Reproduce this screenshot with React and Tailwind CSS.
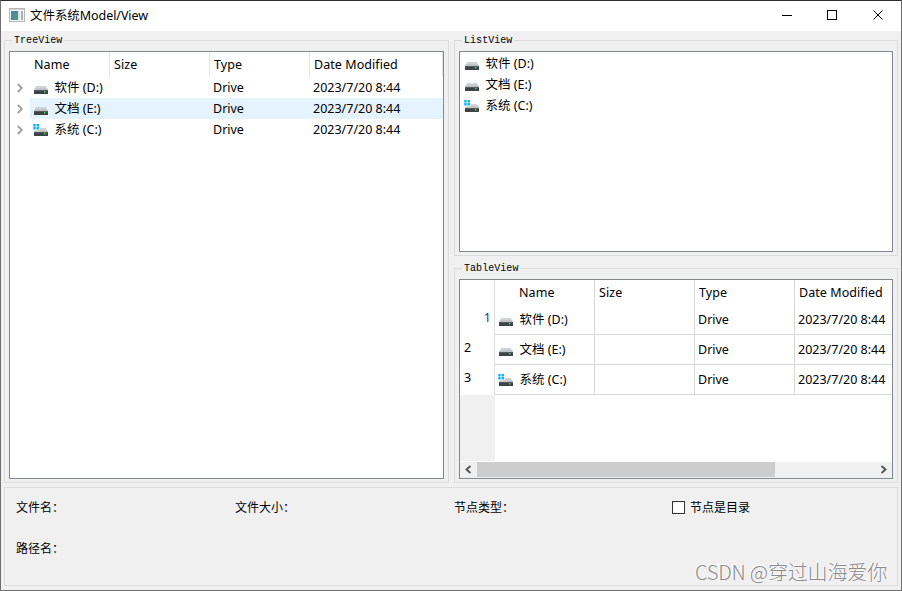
import React from 'react';

const drives = [
  { name: '软件 (D:)', type: 'Drive', date: '2023/7/20 8:44' },
  { name: '文档 (E:)', type: 'Drive', date: '2023/7/20 8:44' },
  { name: '系统 (C:)', type: 'Drive', date: '2023/7/20 8:44', system: true },
];

const DriveIcon = ({ system }) => (
  <svg width="16" height="16" viewBox="0 0 16 16" className="shrink-0">
    <path d="M3.2 6h9.6L15 10H1z" fill="#d0d3d6" />
    <path d="M2 8.2h12L15 10.2H1z" fill="#bfc2c5" />
    <rect x="1" y="10" width="14" height="4" rx="0.5" fill="#3d4245" />
    <rect x="1" y="10" width="14" height="1" fill="#565b5e" />
    <rect x="11" y="11" width="1.4" height="1.4" fill="#3fe05a" />
    {system && (
      <g>
        <rect x="0" y="1" width="6.6" height="7.4" fill="#fff" />
        <path d="M0.2 2h2.5v2.4H0.2zM3.5 2h2.5v2.4H3.5zM0.2 5.1h2.5v2.4H0.2zM3.5 5.1h2.5v2.4H3.5z" fill="#12b4f0" />
      </g>
    )}
  </svg>
);

const WindowIcon = () => (
  <svg width="16" height="16" viewBox="0 0 16 16">
    <defs>
      <linearGradient id="pane" x1="0" y1="0" x2="1" y2="1">
        <stop offset="0" stopColor="#4a86a8" />
        <stop offset="1" stopColor="#4f9a72" />
      </linearGradient>
    </defs>
    <rect x="0.5" y="0.5" width="15" height="13" fill="#f4f5f6" stroke="#b4b6b8" />
    <rect x="1" y="1" width="14" height="1" fill="#cfd3d6" />
    <rect x="2" y="3" width="7" height="9" fill="url(#pane)" />
    <rect x="9" y="3" width="2" height="9" fill="#dfe3e6" />
    <rect x="12" y="3" width="2" height="9" fill="#9fb3b8" />
  </svg>
);

const Chevron = () => (
  <svg width="7" height="10" viewBox="0 0 7 10" fill="none" stroke="#a0a0a0" strokeWidth="1.8">
    <path d="M0.8 1L4.8 5L0.8 9" />
  </svg>
);

const GroupBox = ({ title, className, children }) => (
  <fieldset className={`relative border border-[#dcdcdc] ${className}`}>
    <span className="absolute -top-[7px] left-[7px] h-[13px] bg-[#f0f0f0] px-[2px] font-['Liberation_Mono',monospace] text-[10px] leading-[14px] tracking-[0.05px]">
      {title}
    </span>
    {children}
  </fieldset>
);

const TitleBar = () => (
  <div className="flex h-[30px] items-center bg-white pl-2">
    <WindowIcon />
    <span className="ml-[5px] flex-1 tracking-[-0.06px]">文件系统Model/View</span>
    <svg width="138" height="30" viewBox="0 0 138 30" fill="none" stroke="#000">
      <path d="M19 14.5h10" />
      <rect x="64.5" y="9.5" width="9" height="9" />
      <path d="M110.5 9.5l9 9M119.5 9.5l-9 9" />
    </svg>
  </div>
);

const TreeView = () => (
  <div className="h-[428px] border border-[#828790] bg-white">
    <div className="flex h-[25px] leading-[25px] tracking-[0.06px]">
      <div className="w-[100px] border-r border-[#e5e5e5] pl-6">Name</div>
      <div className="w-[100px] border-r border-[#e5e5e5] pl-1">Size</div>
      <div className="w-[100px] border-r border-[#e5e5e5] pl-1">Type</div>
      <div className="flex-1 border-r border-[#e5e5e5] pl-1">Date Modified</div>
    </div>
    {drives.map((drive, i) => (
      <div key={drive.name} className="flex h-[21px] leading-[21px]">
        <div className="flex w-5 items-center pl-[7px]">
          <Chevron />
        </div>
        <div className={`flex flex-1 ${i === 1 ? 'bg-[#e5f3ff]' : ''}`}>
          <div className="flex w-[183px] items-center gap-[5.5px] pl-[3px]">
            <DriveIcon system={drive.system} />
            {drive.name}
          </div>
          <div className="w-[100px]">{drive.type}</div>
          <div>{drive.date}</div>
        </div>
      </div>
    ))}
  </div>
);

const ListView = () => (
  <div className="h-[201px] border border-[#828790] bg-white pt-px">
    {drives.map((drive) => (
      <div key={drive.name} className="flex h-[21px] items-center gap-[5.5px] pl-1 leading-[21px]">
        <DriveIcon system={drive.system} />
        {drive.name}
      </div>
    ))}
  </div>
);

const TableView = () => (
  <div className="flex h-[200px] flex-col border border-[#828790] bg-white">
    <div className="flex h-[25px] leading-[26px] tracking-[0.06px]">
      <div className="w-[35px] border-r border-[#e0e0e0]" />
      <div className="w-[100px] border-r border-[#d8d8d8] pl-6">Name</div>
      <div className="w-[100px] border-r border-[#d8d8d8] pl-1">Size</div>
      <div className="w-[100px] border-r border-[#d8d8d8] pl-1">Type</div>
      <div className="pl-1">Date Modified</div>
    </div>
    {drives.map((drive, i) => (
      <div key={drive.name} className="flex h-[30px] leading-[30px]">
        <div className={`w-[35px] border-r border-[#e0e0e0] leading-[26px] ${i === 0 ? 'pr-[3px] text-right text-[#1a3f66]' : 'pl-1'}`}>
          {i + 1}
        </div>
        <div className="flex w-[100px] items-center gap-[5.5px] border-r border-b border-[#d8d8d8] pl-[3px]">
          <DriveIcon system={drive.system} />
          {drive.name}
        </div>
        <div className="w-[100px] border-r border-b border-[#d8d8d8]" />
        <div className="w-[100px] border-r border-b border-[#d8d8d8] pl-[3px]">{drive.type}</div>
        <div className="flex-1 border-b border-[#d8d8d8] pl-[3px]">{drive.date}</div>
      </div>
    ))}
    <div className="h-[66px] w-[35px] bg-[#f0f0f0]" />
    <div className="mt-px flex h-4 items-start bg-[#f0f0f0]">
      <svg width="17" height="16" viewBox="0 0 17 16" fill="none" stroke="#505050" strokeWidth="1.8">
        <path d="M10.5 4L6.5 7.5L10.5 11" />
      </svg>
      <div className="h-[15px] w-[298px] bg-[#cdcdcd]" />
      <svg width="17" height="16" viewBox="0 0 17 16" fill="none" stroke="#505050" strokeWidth="1.8" className="ml-auto">
        <path d="M6.5 4L10.5 7.5L6.5 11" />
      </svg>
    </div>
  </div>
);

const InfoPanel = () => (
  <div className="relative ml-[3px] mt-1 h-[99px] w-[894px] border border-[#dcdcdc] pl-[11px] pt-[9px] text-[12px] font-['Noto_Sans_CJK_SC',sans-serif]">
    <div className="grid h-5 grid-cols-[219px_219px_218px_1fr] items-center">
      <span>文件名：</span>
      <span>文件大小：</span>
      <span>节点类型：</span>
      <label className="flex items-center gap-[5px]">
        <span className="h-[13px] w-[13px] border border-[#333] bg-white" />
        节点是目录
      </label>
    </div>
    <div className="mt-[21px] h-5 leading-5">路径名：</div>
    <span className="absolute right-[10px] top-[70px] whitespace-nowrap font-['Noto_Sans_CJK_SC',sans-serif] text-[20px] font-light leading-7 tracking-[-0.15px] text-[#8c8c8c] [text-shadow:-1px_-1px_0_#fff]">
      CSDN @穿过山海爱你
    </span>
  </div>
);

export default function App() {
  return (
    <div className="h-[591px] w-[902px] overflow-hidden border border-[#6f6f6f] border-t-[#302d30] bg-[#f0f0f0] font-['Noto_Sans','Noto_Sans_CJK_SC',sans-serif] text-[12.5px] text-black">
      <TitleBar />
      <div className="ml-[3px] flex gap-[5px] pt-[9px]">
        <GroupBox title="TreeView" className="h-[443px] w-[445px] px-1 pt-[10px]">
          <TreeView />
        </GroupBox>
        <div className="flex w-[444px] flex-col gap-3">
          <GroupBox title="ListView" className="h-[216px] px-1 pt-[10px]">
            <ListView />
          </GroupBox>
          <GroupBox title="TableView" className="h-[215px] px-1 pt-[10px]">
            <TableView />
          </GroupBox>
        </div>
      </div>
      <InfoPanel />
    </div>
  );
}
